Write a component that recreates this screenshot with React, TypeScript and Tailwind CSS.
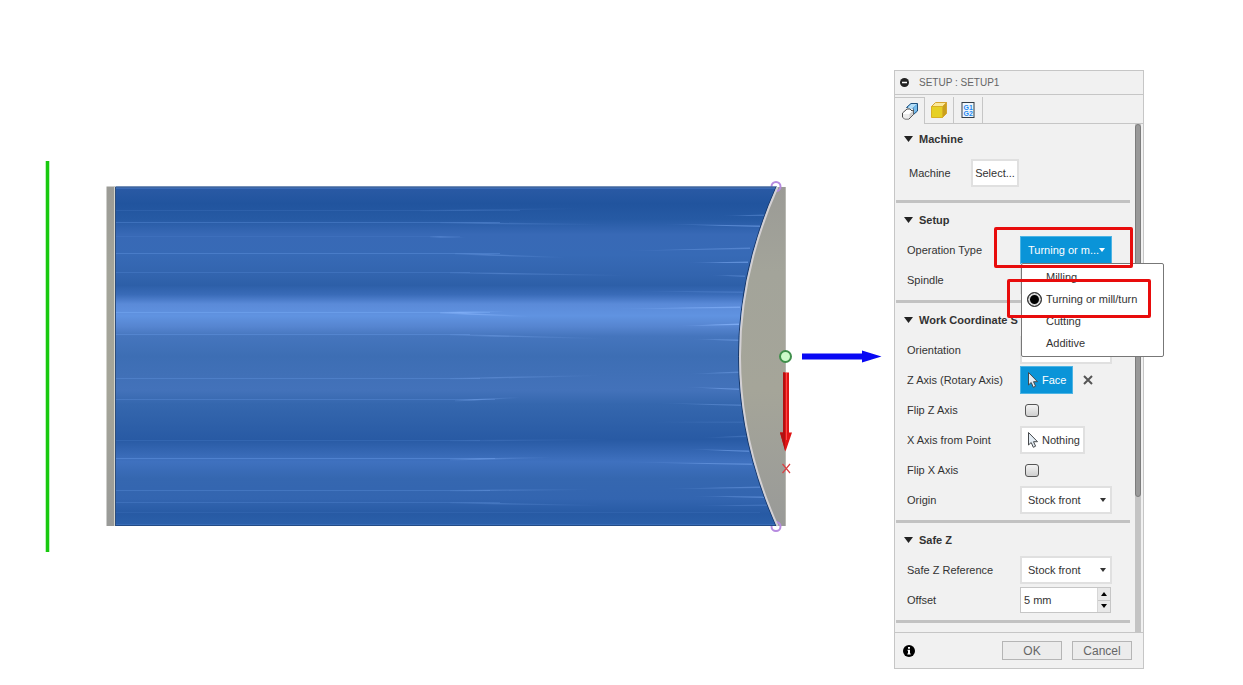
import React from "react";

type Streak = [number, number, number, number, number];

// x1, y1, x2, y2, opacity
const streaks: Streak[] = [
  [116, 188, 776, 188, 0.25],
  [116, 210, 520, 210, 0.14],
  [116, 222, 500, 222, 0.3],
  [116, 236, 460, 236, 0.12],
  [116, 253, 500, 253, 0.35],
  [116, 272, 470, 272, 0.22],
  [116, 312, 490, 312, 0.9],
  [116, 334, 470, 334, 0.35],
  [116, 378, 480, 378, 0.3],
  [116, 399, 495, 399, 0.28],
  [116, 440, 480, 440, 0.16],
  [116, 458, 495, 458, 0.4],
  [116, 490, 490, 490, 0.28],
  [116, 502, 500, 502, 0.22],
  [116, 512, 760, 512, 0.1],
  [116, 524, 775, 524, 0.2],
];

// Streaks that start near mid length and fade toward the face
const fades: Streak[] = [
  [420, 210, 580, 208, 0.15],
  [440, 222, 600, 224, 0.25],
  [430, 236, 465, 237, 0.3],
  [455, 253, 565, 257, 0.35],
  [450, 272, 625, 275, 0.3],
  [440, 312, 530, 316, 0.7],
  [440, 312, 505, 311, 0.7],
  [450, 334, 600, 338, 0.35],
  [450, 378, 600, 375, 0.3],
  [455, 400, 520, 397, 0.4],
  [450, 440, 610, 439, 0.15],
  [450, 459, 550, 457, 0.4],
  [450, 490, 590, 489, 0.25],
  [450, 502, 600, 505, 0.25],
];

const tipStreaks: Streak[] = [
  [720, 216, 766, 215, 0.3],
  [660, 224, 760, 226, 0.45],
  [620, 251, 750, 248, 0.35],
  [685, 263, 748, 262, 0.5],
  [710, 275, 745, 276, 0.3],
  [630, 291, 743, 292, 0.2],
  [610, 309, 740, 307, 0.6],
  [678, 326, 739, 324, 0.75],
  [690, 339, 739, 340, 0.4],
  [688, 374, 739, 372, 0.35],
  [684, 387, 739, 389, 0.45],
  [655, 403, 741, 405, 0.3],
  [640, 422, 743, 422, 0.12],
  [700, 438, 746, 436, 0.2],
  [685, 449, 749, 451, 0.45],
  [620, 462, 752, 464, 0.4],
  [660, 489, 760, 487, 0.35],
  [690, 496, 764, 497, 0.4],
  [690, 506, 767, 505, 0.2],
];

function ModelView() {
  return (
    <svg viewBox="0 0 894 685" className="block h-auto w-full" role="img" aria-label="Turned stock model">
      <defs>
        <linearGradient id="body" x1="0" y1="187" x2="0" y2="526" gradientUnits="userSpaceOnUse">
          <stop offset="0" stopColor="#2a5aa5" />
          <stop offset="0.05" stopColor="#21549e" />
          <stop offset="0.095" stopColor="#265aa4" />
          <stop offset="0.14" stopColor="#3869b6" />
          <stop offset="0.2" stopColor="#376ab6" />
          <stop offset="0.26" stopColor="#3264ae" />
          <stop offset="0.29" stopColor="#2d5fa8" />
          <stop offset="0.317" stopColor="#396bb8" />
          <stop offset="0.345" stopColor="#5a8ad8" />
          <stop offset="0.38" stopColor="#6093e1" />
          <stop offset="0.412" stopColor="#5685d0" />
          <stop offset="0.44" stopColor="#4575bd" />
          <stop offset="0.5" stopColor="#3d6eb4" />
          <stop offset="0.6" stopColor="#4372ba" />
          <stop offset="0.64" stopColor="#3567ae" />
          <stop offset="0.745" stopColor="#285aa4" />
          <stop offset="0.81" stopColor="#3f71bf" />
          <stop offset="0.86" stopColor="#3567b0" />
          <stop offset="0.92" stopColor="#3365b0" />
          <stop offset="0.965" stopColor="#275aa4" />
          <stop offset="1" stopColor="#2c60ab" />
        </linearGradient>
        <linearGradient id="stock" x1="0" y1="0" x2="0" y2="1">
          <stop offset="0" stopColor="#9b9b96" />
          <stop offset="0.25" stopColor="#a3a49a" />
          <stop offset="0.6" stopColor="#a5a599" />
          <stop offset="1" stopColor="#999a98" />
        </linearGradient>
        <linearGradient id="fadeOut">
          <stop offset="0" stopColor="#86b3fa" stopOpacity="0.2" />
          <stop offset="0.3" stopColor="#86b3fa" />
          <stop offset="1" stopColor="#86b3fa" stopOpacity="0" />
        </linearGradient>
        <linearGradient id="fadeIn">
          <stop offset="0" stopColor="#86b3fa" stopOpacity="0" />
          <stop offset="0.6" stopColor="#86b3fa" />
          <stop offset="1" stopColor="#86b3fa" />
        </linearGradient>
      </defs>

      <path d="M47.500 161V552" stroke="#7be878" strokeWidth="4" />
      <path d="M47.500 161V552" stroke="#18c90f" strokeWidth="3" />

      <rect x="106.500" y="186.500" width="9" height="339.500" fill="url(#stock)" />
      <path d="M114.500 187V526" stroke="#d4d4cb" />
      <path d="M777 187Q702 356.500 777 526H785.500V187Z" fill="url(#stock)" />
      <g fill="none" strokeWidth="2" stroke="#b78be0">
        <circle cx="776" cy="186.500" r="4.500" />
        <circle cx="776" cy="526.500" r="4.500" />
      </g>
      <path d="M115.500 186.500H777Q702 356.500 777 526H115.500Z" fill="url(#body)" />
      <g stroke="#6c9feb" strokeWidth="1.200">
        {streaks.map(([x1, y1, x2, y2, o]) => (
          <path key={y1} d={`M${x1} ${y1 + 0.5}L${x2} ${y2 + 0.5}`} opacity={o} />
        ))}
      </g>
      <g fill="url(#fadeOut)">
        {fades.map(([x1, y1, x2, y2, o]) => (
          <path key={`${x2}-${y2}`} d={`M${x1} ${y1}L${x2} ${y2}V${y2 + 1}L${x1} ${y1 + 1.5}Z`} opacity={o} />
        ))}
      </g>
      <g fill="url(#fadeIn)">
        {tipStreaks.map(([x1, y1, x2, y2, o]) => (
          <path key={y1} d={`M${x1} ${y1}L${x2} ${y2 - 0.5}V${y2 + 1}Z`} opacity={o} />
        ))}
      </g>
      <path d="M116 187H777" stroke="#52739f" />
      <path d="M116 525.500H777" stroke="#234b86" />
      <path d="M115.500 187V526" stroke="#2d4d7c" />
      <path d="M776 187Q701 356.500 776 526" fill="none" stroke="#173767" />
      <path d="M777.500 187Q702.500 356.500 777.500 526" fill="none" stroke="#d3d0d3" strokeWidth="2" />
      <path d="M785.500 187V526" stroke="#b8b8b2" />

      <path d="M802 353.500H862V350.500L881.500 356.500L862 362.500V359.500H802Z" fill="#0808f4" />
      <path d="M783 372.500H789V432.500H792L785.500 451.500L780 432.500H783Z" fill="#e01414" />
      <path d="M783 372.500H785V451L780 432.500H783Z" fill="#b31011" />
      <path d="M786.500 373V440" stroke="#fb4a4a" />
      <path d="M782.500 464L790 473M790 464L782.500 473" stroke="#da3f42" strokeWidth="1.200" />
      <circle cx="785.500" cy="356.500" r="5.500" fill="#ccfbc9" stroke="#3f8f4b" strokeWidth="2" />
    </svg>
  );
}

function Caret({ className = "" }: { className?: string }) {
  return (
    <svg viewBox="0 0 6 4" className={`h-1 w-1.5 shrink-0 ${className}`} aria-hidden="true">
      <path d="M0 0H6L3 4Z" fill="currentColor" />
    </svg>
  );
}

function CursorIcon() {
  return (
    <svg viewBox="0 0 12 18" className="h-[18px] w-3 shrink-0" aria-hidden="true">
      <path d="M1.500 1.500V14L4.200 11.500L6.300 16.300L8.600 15.200L6.500 10.700H10.500Z" fill="#e4edf5" stroke="#46494c" />
    </svg>
  );
}

function StockTabIcon() {
  return (
    <svg viewBox="0 0 16 17" className="h-[17px] w-4" aria-hidden="true">
      <path d="M4.500 4.500L9 0.500H15.500V8L11.500 11.500V5Z" fill="#4fa3dd" stroke="#1d4f7c" />
      <path d="M5.500 4.500L9.300 1H15L11 4.700L9 6.500L7 5Z" fill="#b5def7" />
      <path d="M11.500 5.200L15 1.800V7.500L11.500 10.700Z" fill="#79bdec" />
      <path d="M0.500 10L5 6H8L10 8L11.500 7V11.500L7 16H2.500L0.500 14Z" fill="#fff" stroke="#4b4b4b" />
      <path d="M7.300 11.300L11.200 7.600V11.300L7.300 15.300Z" fill="#cfcfcf" />
      <path d="M1 11H7V15.400H2.700L1 13.800Z" fill="#ededed" />
    </svg>
  );
}

function CubeTabIcon() {
  return (
    <svg viewBox="0 0 16 16" className="h-4 w-4" aria-hidden="true">
      <path d="M0.500 4.500L4.500 0.500H15.500L11.500 4.500Z" fill="#fbe99a" stroke="#d6a530" />
      <path d="M11.500 4.500L15.500 0.500V11.500L11.500 15.500Z" fill="#c9a01e" stroke="#d6a530" />
      <path d="M0.500 4.500H11.500V15.500H0.500Z" fill="#e6d024" stroke="#d9b023" />
    </svg>
  );
}

function PostTabIcon() {
  return (
    <svg viewBox="0 0 14 16" className="h-4 w-3.5" aria-hidden="true">
      <rect x="1" y="0.500" width="12" height="15" fill="#eef6fc" stroke="#333d47" />
      <g fill="#1d86f0" fontFamily="Liberation Sans, sans-serif" fontWeight="700" fontSize="7">
        <text x="2.500" y="7.500">G1</text>
        <text x="2.500" y="13.700">G2</text>
      </g>
    </svg>
  );
}

function Section({ title, children }: { title: string; children: React.ReactNode }) {
  return (
    <section className="mr-[5px] border-b-[3px] border-[#c2c2c2] pt-0.5 pb-[5px] first:pt-0 first:pb-2">
      <h2 className="flex h-[30px] items-center gap-1.5 pl-2 text-[11px] font-bold whitespace-nowrap">
        <svg viewBox="0 0 9 6" className="h-1.5 w-[9px]" aria-hidden="true">
          <path d="M0 0H9L4.500 6Z" fill="#222" />
        </svg>
        {title}
      </h2>
      {children}
    </section>
  );
}

function Row({ label, htmlFor, children }: { label: string; htmlFor: string; children: React.ReactNode }) {
  return (
    <div className="flex h-[30px] items-center pl-[11px]">
      <label htmlFor={htmlFor} className="w-[113px] shrink-0 whitespace-nowrap">{label}</label>
      {children}
    </div>
  );
}

function Select({ id, options }: { id: string; options: string[] }) {
  return (
    <div className="relative h-7 w-[92px]">
      <select id={id} className="h-full w-full appearance-none border-2 border-[#e0e0e0] bg-white pl-1.5 outline-none">
        {options.map((option) => (
          <option key={option}>{option}</option>
        ))}
      </select>
      <Caret className="pointer-events-none absolute top-3 right-1.5" />
    </div>
  );
}

function Check({ id }: { id: string }) {
  return (
    <input
      id={id}
      type="checkbox"
      className="ml-[5px] h-[13px] w-[14px] appearance-none rounded-[3px] border border-[#555] bg-linear-to-b from-[#f4f4f4] to-[#cfcfcf]"
    />
  );
}

const operations = ["Milling", "Turning or mill/turn", "Cutting", "Additive"];

export default function App() {
  return (
    <main className="flex min-h-screen items-start bg-white font-['Liberation_Sans',Arial,sans-serif] text-[11px] text-[#333]">
      <div className="min-w-0 flex-1">
        <ModelView />
      </div>
      <aside className="mt-[70px] mr-[99px] w-[250px] shrink-0 border border-[#c6c6c6] bg-[#f1f1f1]">
        <header className="flex h-6 items-center gap-2.5 border-b border-[#c6c6c6] pl-[5px] text-[10px] text-[#666]">
          <svg viewBox="0 0 9 9" className="h-[9px] w-[9px]" aria-hidden="true">
            <circle cx="4.500" cy="4.500" r="4.500" fill="#222" />
            <path d="M2 4.500H7" stroke="#fff" strokeWidth="1.500" />
          </svg>
          <h1>SETUP : SETUP1</h1>
        </header>

        <div role="tablist" className="flex h-[29px] border-b border-[#c6c6c6] pt-0.5">
          <button role="tab" aria-selected="true" aria-label="Setup" className="-mb-px flex w-[30px] items-center justify-center border-t border-r border-[#c6c6c6] bg-[#f1f1f1]">
            <StockTabIcon />
          </button>
          <button role="tab" aria-selected="false" aria-label="Stock" className="flex w-[29px] items-center justify-center border-r border-[#c6c6c6]">
            <CubeTabIcon />
          </button>
          <button role="tab" aria-selected="false" aria-label="Post process" className="flex w-[29px] items-center justify-center border-r border-[#c6c6c6]">
            <PostTabIcon />
          </button>
        </div>

        <div className="flex">
          <div className="min-w-0 flex-1 pb-[9px] pl-px">
            <Section title="Machine">
              <div className="flex h-[38px] items-center pl-[13px]">
                <span className="w-[62px]">Machine</span>
                <button className="h-7 w-12 border-2 border-[#e0e0e0] bg-white">Select...</button>
              </div>
            </Section>

            <Section title="Setup">
              <Row label="Operation Type" htmlFor="operation">
                <div className="relative">
                  <button id="operation" aria-haspopup="listbox" aria-expanded="true" className="flex h-7 w-[92px] items-center justify-between border border-[#4db4e4] bg-[#0a94d8] pr-1.5 pl-[7px] whitespace-nowrap text-white">
                    Turning or m...
                    <Caret />
                  </button>
                  <fieldset className="absolute top-[27px] left-px z-10 h-[94px] w-[143px] rounded-[2px] border border-[#777] bg-white pt-0.5">
                    {operations.map((name, i) => (
                      <label key={name} className="flex h-[22px] items-center gap-1 pl-[5px]">
                        <input
                          type="radio"
                          name="operation"
                          defaultChecked={i === 1}
                          className="h-[15px] w-[15px] appearance-none rounded-full checked:border checked:border-[#333] checked:bg-black checked:shadow-[inset_0_0_0_2px_#d6d6d6]"
                        />
                        {name}
                      </label>
                    ))}
                  </fieldset>
                  <div className="pointer-events-none absolute -top-[9px] -left-[26px] z-20 h-[41px] w-[139px] rounded-[2px] border-3 border-[#e80c0c]" />
                  <div className="pointer-events-none absolute top-[43px] -left-[13px] z-20 h-[39px] w-[144px] rounded-[2px] border-3 border-[#e80c0c]" />
                </div>
              </Row>
              <Row label="Spindle" htmlFor="spindle">
                <Select id="spindle" options={[]} />
              </Row>
            </Section>

            <Section title="Work Coordinate S">
              <Row label="Orientation" htmlFor="orientation">
                <Select id="orientation" options={[]} />
              </Row>
              <Row label="Z Axis (Rotary Axis)" htmlFor="z-axis">
                <button id="z-axis" className="flex h-7 w-[53px] items-center gap-[3px] border border-[#4db4e4] bg-[#0a94d8] pl-1.5 text-white">
                  <CursorIcon />
                  Face
                </button>
                <button aria-label="Clear Z axis" className="ml-2.5">
                  <svg viewBox="0 0 10 10" className="h-2.5 w-2.5" aria-hidden="true">
                    <path d="M1 1L9 9M9 1L1 9" stroke="#555" strokeWidth="2" />
                  </svg>
                </button>
              </Row>
              <Row label="Flip Z Axis" htmlFor="flip-z">
                <Check id="flip-z" />
              </Row>
              <Row label="X Axis from Point" htmlFor="x-axis">
                <button id="x-axis" className="flex h-7 w-[65px] items-center gap-[3px] border-2 border-[#e0e0e0] bg-white pl-[5px]">
                  <CursorIcon />
                  Nothing
                </button>
              </Row>
              <Row label="Flip X Axis" htmlFor="flip-x">
                <Check id="flip-x" />
              </Row>
              <Row label="Origin" htmlFor="origin">
                <Select id="origin" options={["Stock front"]} />
              </Row>
            </Section>

            <Section title="Safe Z">
              <Row label="Safe Z Reference" htmlFor="safe-z">
                <Select id="safe-z" options={["Stock front"]} />
              </Row>
              <Row label="Offset" htmlFor="offset">
                <div className="flex h-[26px] w-[91px] border border-[#c6c6c6] bg-white">
                  <input id="offset" defaultValue="5 mm" className="w-0 min-w-0 flex-1 pl-[3px] outline-none" />
                  <div className="flex w-[13px] flex-col divide-y divide-[#c6c6c6] border-l border-[#d6d6d6] bg-[#e8e8e8] text-black">
                    <button aria-label="Increase offset" className="flex flex-1 items-center justify-center">
                      <Caret className="rotate-180" />
                    </button>
                    <button aria-label="Decrease offset" className="flex flex-1 items-center justify-center">
                      <Caret />
                    </button>
                  </div>
                </div>
              </Row>
            </Section>
          </div>
          <div className="mr-0.5 w-1.5 bg-[#c4c4c4]">
            <div className="h-[373px] rounded-full border border-[#7c7c7c] bg-[#999]" />
          </div>
        </div>

        <footer className="flex h-9 items-center gap-2.5 border-t border-[#c6c6c6] pr-[11px] pl-2 text-[12px] text-[#666]">
          <button aria-label="Information" className="mr-auto">
            <svg viewBox="0 0 12 12" className="h-3 w-3" aria-hidden="true">
              <circle cx="6" cy="6" r="6" fill="#000" />
              <path d="M5 2H7V3.700H5ZM4.500 4.800H7V8.500H7.700V9.500H4.300V8.500H5V5.800H4.500Z" fill="#fff" />
            </svg>
          </button>
          <button className="h-[19px] w-[60px] border border-[#b5b5b5] bg-[#ececec]">OK</button>
          <button className="h-[19px] w-[60px] border border-[#b5b5b5] bg-[#ececec]">Cancel</button>
        </footer>
      </aside>
    </main>
  );
}
